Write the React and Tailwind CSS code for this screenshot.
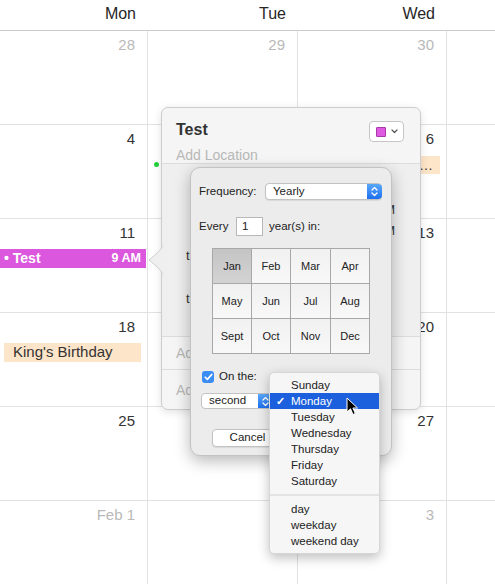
import React from "react";

const gray = "text-[#b9b9b9]";

function Stepper({ className = "" }) {
  return (
    <div className={"flex h-full w-[15px] items-center justify-center rounded-r-[4px] bg-gradient-to-b from-[#5aa7fb] to-[#1b6ff0] " + className}>
      <svg width="7" height="11" viewBox="0 0 7 11" fill="none" stroke="white" strokeWidth="1.3" strokeLinecap="round" strokeLinejoin="round">
        <path d="M1 4 L3.5 1.5 L6 4" />
        <path d="M1 7 L3.5 9.5 L6 7" />
      </svg>
    </div>
  );
}

function Cell({ n, g, ev, w, last }) {
  return (
    <div className={"flex flex-col " + (last ? "" : "border-r border-[#e2e2e2] ") + w}>
      <div className={"h-[23px] pt-[5px] pr-[12px] text-right text-[15px] leading-[18px] " + (g ? gray : "text-[#333]")}>
        {n}
      </div>
      {ev === "test" && (
        <div className="mt-[7px] mr-[1px] flex h-[19px] items-center justify-between bg-[#db57dd] pl-[4px] pr-[5px] font-bold text-white">
          <span className="text-[14px]">• Test</span>
          <span className="text-[12.5px]">9 AM</span>
        </div>
      )}
      {ev === "king" && (
        <div className="mt-[7px] ml-[4px] mr-[6px] flex h-[19px] items-center bg-[#fde5c9] pl-[9px] text-[15px] text-[#333]">
          King's Birthday
        </div>
      )}
      {ev === "orth" && (
        <div className="mt-[8px] ml-[4px] mr-[6px] flex h-[18px] items-center bg-[#fde5c9] pl-[9px] pr-[7px] text-[14px] text-[#333]">
          <span className="flex-1 overflow-hidden whitespace-nowrap">Orthodox Christmas Day</span>
          <span>…</span>
        </div>
      )}
    </div>
  );
}

const widths = ["w-[148px]", "w-[150px]", "w-[149px]", "flex-1"];

const rows = [
  [{ n: "28", g: true }, { n: "29", g: true }, { n: "30", g: true }],
  [{ n: "4" }, { n: "5" }, { n: "6", ev: "orth" }],
  [{ n: "11", ev: "test" }, { n: "12" }, { n: "13" }],
  [{ n: "18", ev: "king" }, { n: "19" }, { n: "20" }],
  [{ n: "25" }, { n: "26" }, { n: "27" }],
  [{ n: "Feb 1", g: true }, { n: "2", g: true }, { n: "3", g: true }],
];

const months = ["Jan", "Feb", "Mar", "Apr", "May", "Jun", "Jul", "Aug", "Sept", "Oct", "Nov", "Dec"];
const colW = ["w-[39px]", "w-[39px]", "w-[40px]", "w-[39px]"];

const menuItems = ["Sunday", "Monday", "Tuesday", "Wednesday", "Thursday", "Friday", "Saturday"];

export default function App() {
  return (
    <div className="relative h-[584px] w-[495px] overflow-hidden bg-white font-['Liberation_Sans',Arial,sans-serif]">
      {/* header */}
      <div className="flex h-[31px] border-b border-[#cbcbd0]">
        {["Mon", "Tue", "Wed", ""].map((d, i) => (
          <div key={i} className={"pt-[4px] pr-[11px] text-right text-[16px] leading-[19px] text-[#262626] " + widths[i] + (i < 3 ? " border-r border-transparent" : "")}>
            {d}
          </div>
        ))}
      </div>
      {/* weeks */}
      {rows.map((r, ri) => (
        <div key={ri} className="flex h-[94px] border-b border-[#e2e2e2]">
          {r.map((c, ci) => (
            <Cell key={ci} {...c} w={widths[ci]} />
          ))}
          <Cell w={widths[3]} last />
        </div>
      ))}

      {/* green dot */}
      <div className="absolute left-[154px] top-[162px] h-[5px] w-[5px] rounded-full bg-[#22d33a]" />

      {/* event popover */}
      <div className="absolute left-[161px] top-[107px] w-[260px] rounded-[7px] border border-[#cdcdcd] bg-[#f5f5f5] shadow-[0_2px_8px_rgba(0,0,0,0.12)]">
        {/* arrow */}
        <svg className="absolute left-[-14px] top-[138px]" width="15" height="28" viewBox="0 0 15 28">
          <path d="M14.5 0 C12 6 4 11 1 14 C4 17 12 22 14.5 28 Z" fill="#efefef" />
          <path d="M14.5 0 C12 6 4 11 1 14 C4 17 12 22 14.5 28" fill="none" stroke="#cdcdcd" strokeWidth="1" />
        </svg>
        <div className="h-[56px] border-b border-[#dcdcdc] pl-[14px] pr-[16px] pt-[12px]">
          <div className="flex items-start justify-between">
            <div className="text-[16px] font-bold leading-[19px] text-[#333]">Test</div>
            <div className="mt-[1px] flex h-[21px] w-[35px] items-center justify-between rounded-[4px] border border-[#c6c6c6] bg-white pl-[6px] pr-[5px]">
              <div className="h-[10px] w-[10px] rounded-[1px] border border-[#a63aa6] bg-[#de5ae0]" />
              <svg width="7" height="5" viewBox="0 0 7 5" fill="none" stroke="#555" strokeWidth="1.2" strokeLinecap="round" strokeLinejoin="round">
                <path d="M1 1 L3.5 3.5 L6 1" />
              </svg>
            </div>
          </div>
          <div className="mt-[5px] text-[14px] leading-[17px] text-[#b8b8b8]">Add Location</div>
        </div>
        <div className="flex h-[173px] flex-col border-b border-[#dcdcdc] bg-[#efefef] pl-[24px] pr-[25px] pt-[38px] text-[13px] leading-[16px] text-[#333]">
          <div className="text-right">01/11/2016 9:00 AM</div>
          <div className="mt-[5px] text-right">10:00 AM</div>
          <div className="mt-[9px]">time zone:</div>
          <div className="mt-[27px]">travel time:</div>
        </div>
        <div className="flex h-[33px] items-center border-b border-[#dcdcdc] pl-[14px] text-[14px] text-[#b8b8b8]">Add Invitees</div>
        <div className="flex h-[39px] items-start pl-[14px] pt-[10px] text-[14px] text-[#b8b8b8]">Add Notes, URL, or Attachments</div>
      </div>

      {/* repeat sheet */}
      <div className="absolute left-[190px] top-[167px] h-[289px] w-[202px] rounded-[10px] border border-[#c3c3c3] bg-[#ececec] text-[11.5px] text-[#222] shadow-[0_5px_16px_rgba(0,0,0,0.28)]">
        <div className="mt-[15px] flex h-[17px] items-center pl-[8px]">
          <div className="w-[66px]">Frequency:</div>
          <div className="flex h-[17px] w-[117px] items-center justify-between rounded-[4px] border border-[#c2c2c2] bg-white shadow-[0_1px_1px_rgba(0,0,0,0.08)]">
            <span className="pl-[7px]">Yearly</span>
            <Stepper className="mr-[-1px]" />
          </div>
        </div>
        <div className="mt-[17px] flex h-[19px] items-center pl-[8px]">
          <div className="w-[37px]">Every</div>
          <div className="flex h-[19px] w-[27px] items-center border border-[#b8b8b8] bg-white pl-[5px]">1</div>
          <div className="ml-[6px]">year(s) in:</div>
        </div>
        <div className="ml-[21px] mt-[12px] flex w-[158px] flex-wrap border-l border-t border-[#a8a8a8]">
          {months.map((m, i) => (
            <div
              key={m}
              className={
                "flex h-[35px] items-center justify-center border-b border-r border-[#a8a8a8] text-[11px] text-[#222] " +
                colW[i % 4] +
                (i === 0
                  ? " bg-gradient-to-b from-[#c4c4c4] to-[#d3d3d3]"
                  : " bg-gradient-to-b from-[#f1f1f1] to-[#f8f8f8]")
              }
            >
              {m}
            </div>
          ))}
        </div>
        <div className="ml-[11px] mt-[17px] flex h-[12px] items-center">
          <div className="flex h-[12px] w-[12px] items-center justify-center rounded-[3px] bg-[#3b8df6]">
            <svg width="9" height="8" viewBox="0 0 9 8" fill="none" stroke="white" strokeWidth="1.6" strokeLinecap="round" strokeLinejoin="round">
              <path d="M1.2 4.2 L3.4 6.4 L7.8 1.4" />
            </svg>
          </div>
          <span className="ml-[5px]">On the:</span>
        </div>
        <div className="ml-[10px] mt-[10px] flex h-[16px] w-[72px] items-center justify-between rounded-[4px] border border-[#c2c2c2] bg-white">
          <span className="pl-[7px]">second</span>
          <Stepper className="mr-[-1px]" />
        </div>
        <div className="ml-[21px] mt-[20px] flex gap-[8px]">
          <div className="flex h-[18px] w-[71px] items-center justify-center rounded-[4px] border border-[#c2c2c2] bg-white shadow-[0_1px_1px_rgba(0,0,0,0.08)]">Cancel</div>
          <div className="flex h-[18px] w-[71px] items-center justify-center rounded-[4px] bg-[#3b8df6] text-white">OK</div>
        </div>
      </div>

      {/* dropdown menu */}
      <div className="absolute left-[269px] top-[372px] w-[111px] rounded-[5px] border border-[#d6d6d6] bg-[#f6f6f6] py-[4px] text-[11.5px] leading-[16px] text-[#222] shadow-[0_4px_12px_rgba(0,0,0,0.25)]">
        {menuItems.map((d) => (
          <div key={d} className={"relative h-[16px] pl-[21px] " + (d === "Monday" ? "bg-[#1c60dd] text-white" : "")}>
            {d === "Monday" && <span className="absolute left-[6px] top-0 text-[11px] font-bold">✓</span>}
            {d}
          </div>
        ))}
        <div className="my-[5px] h-[2px] bg-[#e3e3e3]" />
        {["day", "weekday", "weekend day"].map((d) => (
          <div key={d} className="h-[16px] pl-[21px]">{d}</div>
        ))}
      </div>

      {/* cursor */}
      <svg className="absolute left-[346px] top-[397px]" width="13" height="20" viewBox="0 0 13 20">
        <path d="M1 1 L1 15 L4.5 11.8 L7 17.5 L9.3 16.5 L6.9 11 L11.5 11 Z" fill="black" stroke="white" strokeWidth="1" strokeLinejoin="round" />
      </svg>
    </div>
  );
}
